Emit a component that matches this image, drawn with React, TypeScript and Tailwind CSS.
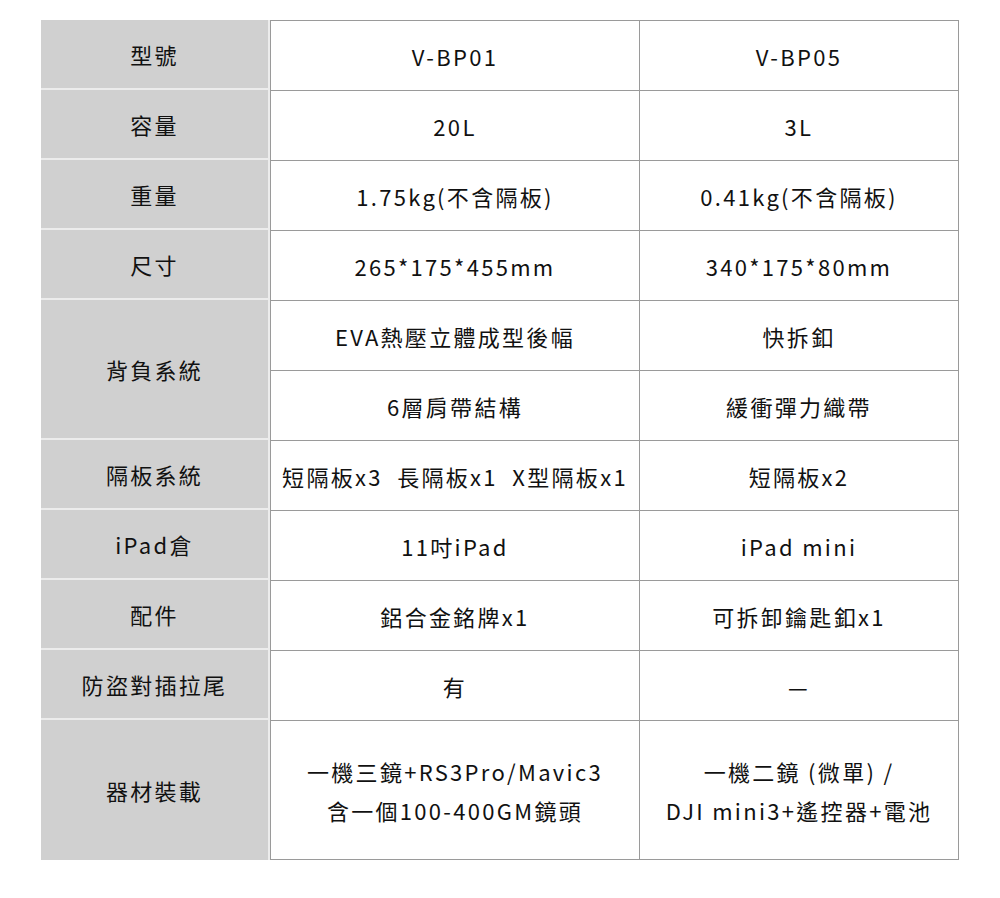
const font = { fontFamily: '"Noto Sans CJK TC", "Noto Sans", sans-serif' }

type Row = { label: string; a: string[]; b: string[] }

const rows: Row[] = [
  { label: "型號", a: ["V-BP01"], b: ["V-BP05"] },
  { label: "容量", a: ["20L"], b: ["3L"] },
  { label: "重量", a: ["1.75kg(不含隔板)"], b: ["0.41kg(不含隔板)"] },
  { label: "尺寸", a: ["265*175*455mm"], b: ["340*175*80mm"] },
]

const rowsAfter: Row[] = [
  { label: "隔板系統", a: ["短隔板x3\u00a0\u00a0長隔板x1\u00a0\u00a0X型隔板x1"], b: ["短隔板x2"] },
  { label: "iPad倉", a: ["11吋iPad"], b: ["iPad mini"] },
  { label: "配件", a: ["鋁合金銘牌x1"], b: ["可拆卸鑰匙釦x1"] },
  { label: "防盜對插拉尾", a: ["有"], b: ["—"] },
]

function Label({ children, last, span }: { children: React.ReactNode; last?: boolean; span?: boolean }) {
  return (
    <div
      className={`flex items-center justify-center bg-[#d0d0d0] border-r-2 border-r-[#ececec] ${
        last ? "" : "border-b-2 border-b-[#ececec]"
      } ${span ? "row-span-2" : ""}`}
    >
      {children}
    </div>
  )
}

function Cell({ lines, first, last }: { lines: string[]; first?: boolean; last?: boolean }) {
  return (
    <div
      className={`flex flex-col items-center justify-center gap-[7px] border-t border-r border-[#9a9a9a] ${
        first ? "border-l" : ""
      } ${last ? "border-b" : ""}`}
    >
      {lines.map((l, i) => (
        <div key={i} className="whitespace-nowrap">
          {l}
        </div>
      ))}
    </div>
  )
}

export default function App() {
  return (
    <div className="w-[1000px] h-[898px] bg-white pt-[20px] pl-[41px]" style={font}>
      <div className="grid grid-cols-[229px_370px_319px] grid-rows-[repeat(10,70px)_140px] text-[22px] leading-[32px] tracking-[2.3px] text-[#111]">
        {rows.map((r) => (
          <>
            <Label key={r.label}>{r.label}</Label>
            <Cell lines={r.a} first />
            <Cell lines={r.b} />
          </>
        ))}
        <Label span>背負系統</Label>
        <Cell lines={["EVA熱壓立體成型後幅"]} first />
        <Cell lines={["快拆釦"]} />
        <Cell lines={["6層肩帶結構"]} first />
        <Cell lines={["緩衝彈力織帶"]} />
        {rowsAfter.map((r) => (
          <>
            <Label key={r.label}>{r.label}</Label>
            <Cell lines={r.a} first />
            <Cell lines={r.b} />
          </>
        ))}
        <Label last>器材裝載</Label>
        <Cell lines={["一機三鏡+RS3Pro/Mavic3", "含一個100-400GM鏡頭"]} first last />
        <Cell lines={["一機二鏡 (微單) /", "DJI mini3+遙控器+電池"]} last />
      </div>
    </div>
  )
}
